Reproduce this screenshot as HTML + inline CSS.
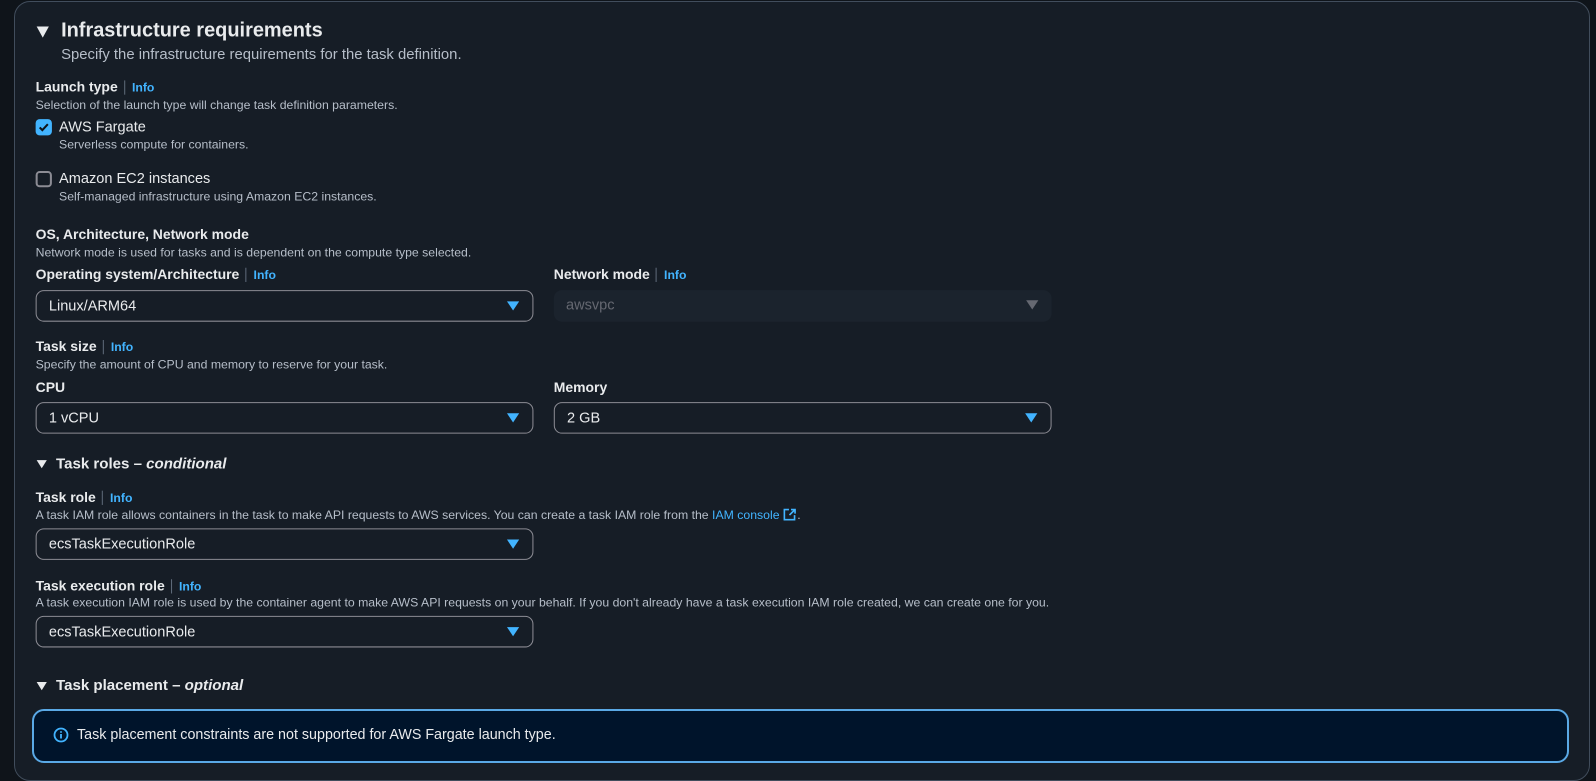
<!DOCTYPE html>
<html><head><meta charset="utf-8"><style>
*{margin:0;padding:0;box-sizing:border-box}
html,body{width:1596px;height:767px;overflow:hidden;background:#0f141a;font-family:"Liberation Sans",sans-serif;color:#c6c6cd}
.card{position:absolute;left:14px;top:1px;width:1576px;height:780px;background:#161d26;border:1px solid #414d5c;border-radius:16px}
.wrap{position:absolute;left:0;top:0;width:1568px;height:760px;transform:scale(1.018);transform-origin:0 0}
.a{position:absolute;white-space:nowrap}
.h{font-size:13.7px;font-weight:bold;color:#e9ebed;line-height:18px}
.d{font-size:12.05px;color:#b6bec9;line-height:16px}
.t{font-size:14.3px;color:#e9ebed;line-height:18px}
.info{font-size:12px;font-weight:bold;color:#42b4ff;margin-left:6px;padding-left:7px;border-left:1px solid #5f6b7a;line-height:14px;display:inline-block;vertical-align:0}
.sel{position:absolute;height:31px;border:1px solid #8c8c94;border-radius:8px;font-size:14.3px;color:#e9ebed;padding-left:12px;line-height:31px}
.sel:after{content:"";position:absolute;right:13px;top:10px;border-left:6px solid transparent;border-right:6px solid transparent;border-top:9px solid #42b4ff}
.dis{border:none;background:#1b232d;color:#656871}
.dis:after{border-top-color:#656871;top:10px}
.tri{position:absolute;width:0;height:0;border-left:6px solid transparent;border-right:6px solid transparent;border-top:10px solid #e9ebed}
.cb{position:absolute;width:16px;height:16px;border-radius:4px}
</style></head><body>
<div class="card"></div>
<div class="wrap">
<div class="tri" style="left:36px;top:26px;border-left-width:6.5px;border-right-width:6.5px;border-top-width:11px"></div>
<div class="a" style="left:60px;top:17px;font-size:19.6px;font-weight:bold;color:#e9ebed;line-height:26px">Infrastructure requirements</div>
<div class="a" style="left:60px;top:45px;font-size:14.6px;color:#b6bec9;line-height:18px">Specify the infrastructure requirements for the task definition.</div>

<div class="a h" style="left:35px;top:77px">Launch type<span class="info">Info</span></div>
<div class="a d" style="left:35px;top:95px">Selection of the launch type will change task definition parameters.</div>
<div class="cb" style="left:35px;top:117px;background:#42b4ff"><svg width="16" height="16" viewBox="0 0 16 16"><path d="M4 8.2l2.6 2.6L12 5" fill="none" stroke="#0f141a" stroke-width="2"/></svg></div>
<div class="a t" style="left:58px;top:116px">AWS Fargate</div>
<div class="a d" style="left:58px;top:134px">Serverless compute for containers.</div>
<div class="cb" style="left:35px;top:168px;border:2px solid #8c8c94"></div>
<div class="a t" style="left:58px;top:167px">Amazon EC2 instances</div>
<div class="a d" style="left:58px;top:185px">Self-managed infrastructure using Amazon EC2 instances.</div>

<div class="a h" style="left:35px;top:222px">OS, Architecture, Network mode</div>
<div class="a d" style="left:35px;top:240px">Network mode is used for tasks and is dependent on the compute type selected.</div>
<div class="a h" style="left:35px;top:261px">Operating system/Architecture<span class="info">Info</span></div>
<div class="a h" style="left:544px;top:261px">Network mode<span class="info">Info</span></div>
<div class="sel" style="left:35px;top:285px;width:489px">Linux/ARM64</div>
<div class="sel dis" style="left:544px;top:285px;width:489px">awsvpc</div>

<div class="a h" style="left:35px;top:332px">Task size<span class="info">Info</span></div>
<div class="a d" style="left:35px;top:350px">Specify the amount of CPU and memory to reserve for your task.</div>
<div class="a h" style="left:35px;top:372px">CPU</div>
<div class="a h" style="left:544px;top:372px">Memory</div>
<div class="sel" style="left:35px;top:395px;width:489px">1 vCPU</div>
<div class="sel" style="left:544px;top:395px;width:489px">2 GB</div>

<div class="tri" style="left:36px;top:452px;border-left-width:5px;border-right-width:5px;border-top-width:8px"></div>
<div class="a" style="left:55px;top:446px;font-size:14.8px;font-weight:bold;color:#e9ebed;line-height:20px">Task roles – <i>conditional</i></div>
<div class="a h" style="left:35px;top:480px">Task role<span class="info">Info</span></div>
<div class="a d" style="left:35px;top:498px">A task IAM role allows containers in the task to make API requests to AWS services. You can create a task IAM role from the <span style="color:#42b4ff">IAM console <svg width="14" height="13" viewBox="0 0 14 13" style="vertical-align:-2px"><path d="M6 1.5H1.5v10h10V7M8 1.5h4v4M12 1.5L6.5 7" fill="none" stroke="#42b4ff" stroke-width="1.6"/></svg></span>.</div>
<div class="sel" style="left:35px;top:519px;width:489px">ecsTaskExecutionRole</div>

<div class="a h" style="left:35px;top:567px">Task execution role<span class="info">Info</span></div>
<div class="a d" style="left:35px;top:584px">A task execution IAM role is used by the container agent to make AWS API requests on your behalf. If you don't already have a task execution IAM role created, we can create one for you.</div>
<div class="sel" style="left:35px;top:605px;width:489px">ecsTaskExecutionRole</div>

<div class="tri" style="left:36px;top:670px;border-left-width:5px;border-right-width:5px;border-top-width:8px"></div>
<div class="a" style="left:55px;top:664px;font-size:14.8px;font-weight:bold;color:#e9ebed;line-height:20px">Task placement – <i>optional</i></div>
</div>
<div style="position:absolute;left:32px;top:709px;width:1537px;height:54px;border:2px solid #5aa9e6;border-radius:12px;background:#00142b"></div>
<svg class="a" style="left:53px;top:727px" width="16" height="16" viewBox="0 0 16 16"><circle cx="8" cy="8" r="6.5" fill="none" stroke="#42b4ff" stroke-width="1.8"/><path d="M8 7v4.5M8 4.2v1.6" stroke="#42b4ff" stroke-width="1.8"/></svg>
<div class="a" style="left:77px;top:726px;font-size:14.3px;color:#e9ebed;line-height:18px">Task placement constraints are not supported for AWS Fargate launch type.</div>
</body></html>
